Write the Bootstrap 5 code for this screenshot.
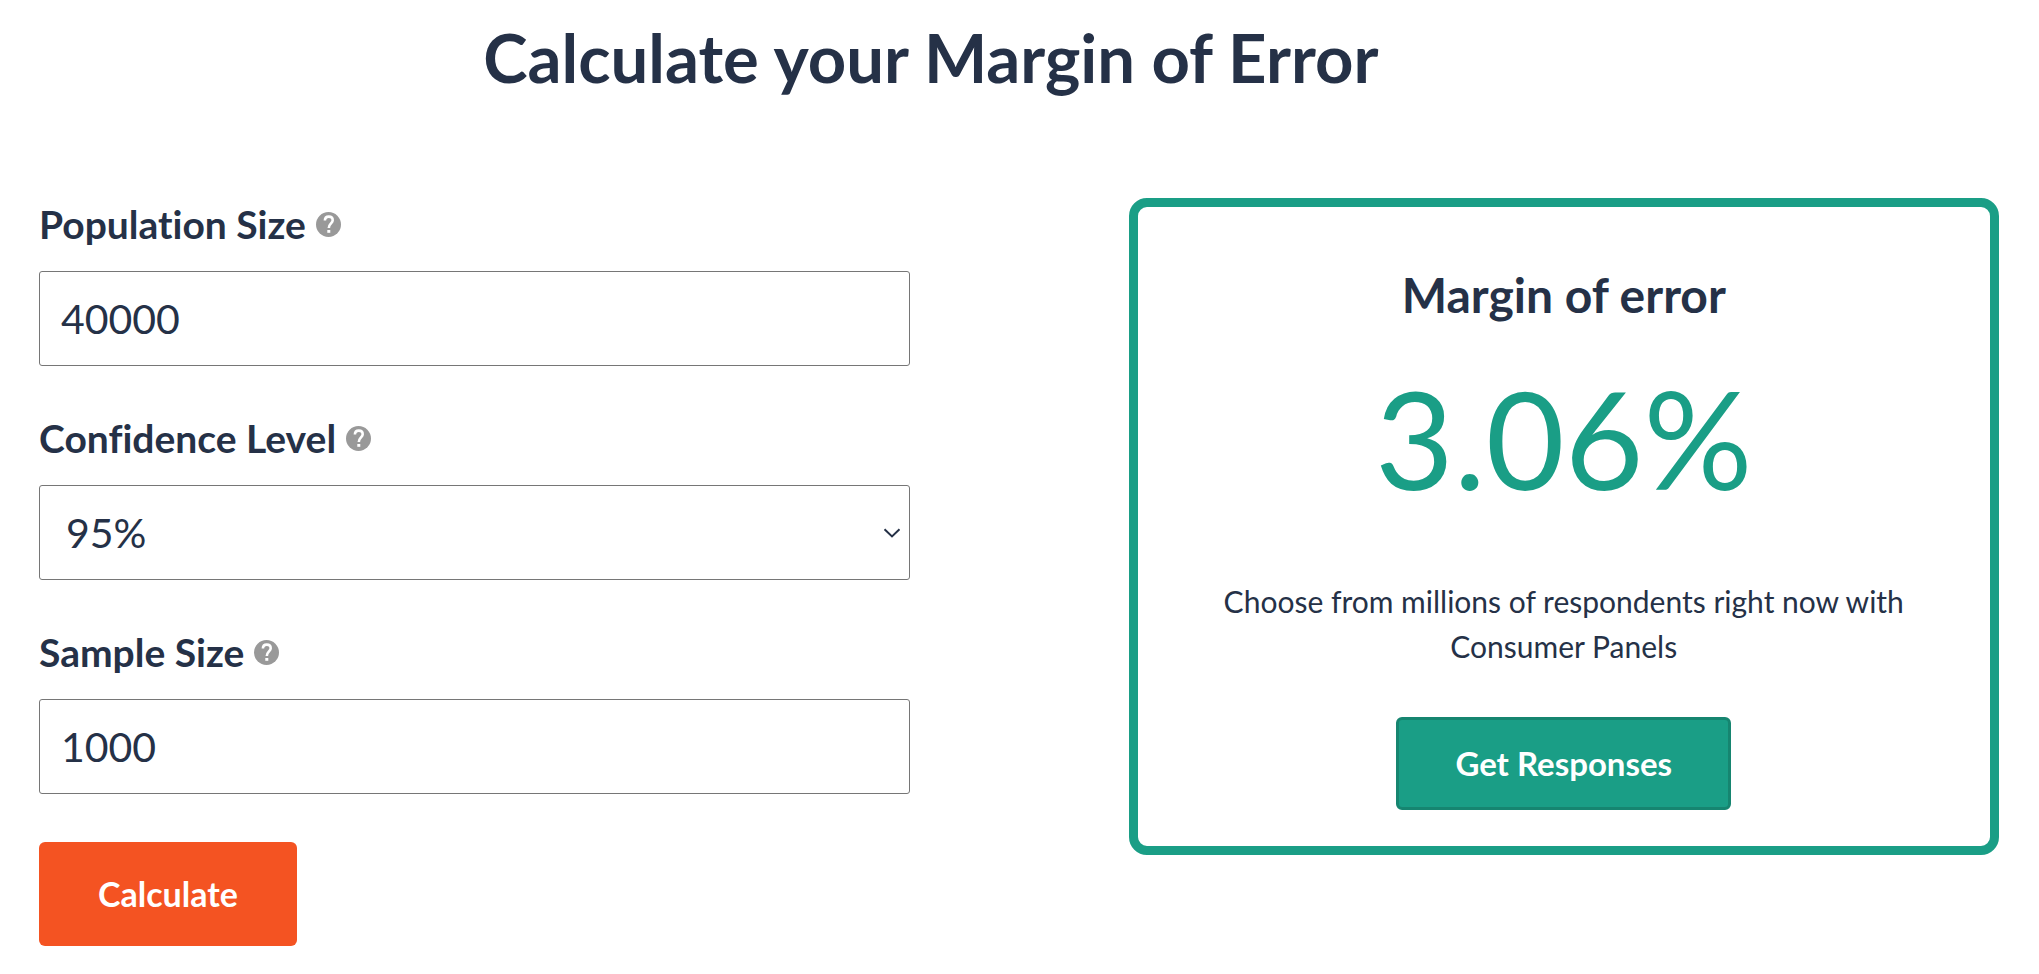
<!DOCTYPE html>
<html lang="en">
<head>
<meta charset="utf-8">
<meta name="viewport" content="width=device-width, initial-scale=1">
<title>Margin of Error Calculator</title>
<link href="https://cdn.jsdelivr.net/npm/bootstrap@5.3.0/dist/css/bootstrap.min.css" rel="stylesheet">
<style>
  :root { --ink: #253147; --teal: #1a9e86; --orange: #f45322; }
  body { font-family: Lato, sans-serif; font-variant-ligatures: none; color: var(--ink); background: #fff; }
  .page { padding: 17px 40px 24px 39px; }
  .page-title { font-size: 67px; line-height: 80px; font-weight: 700; width: 91%; margin-bottom: 101px; }
  .calculator { display: grid; grid-template-columns: 1fr; gap: 48px; align-items: start; }
  @media (min-width: 1200px) { .calculator { grid-template-columns: 1fr 1fr; column-gap: 219px; } }

  .calc-form { padding-top: 2px; }
  .field { margin-bottom: 48px; }
  .field-head { gap: 10px; margin-bottom: 23px; }
  .field-head label { font-size: 39px; line-height: 48px; font-weight: 700; }
  .help { width: 25px; height: 25px; }
  .field .form-control, .field .form-select {
    height: 95px; padding: 0 21px; font-size: 41px; color: var(--ink);
    border: 1px solid #767676; border-radius: 3px; background-color: #fff;
  }
  .field .form-select {
    padding: 0 48px 0 26px;
    background-image: url("data:image/svg+xml,%3csvg xmlns='http://www.w3.org/2000/svg' viewBox='0 0 18 10'%3e%3cpath fill='none' stroke='%23253147' stroke-width='2' d='M1.5 1.2 9 8.4 16.5 1.2'/%3e%3c/svg%3e");
    background-size: 18px 10px; background-position: right 8px center;
  }
  .btn-action { line-height: 40px; font-weight: 700; color: #fff; border-radius: 6px; }
  .btn-calculate { font-size: 34px; padding: 32px 59px; border: 0; background: var(--orange); }
  .btn-responses { font-size: 33px; padding: 23px 56px 24px; border: 3px solid #168570; background: var(--teal); }
  .btn-calculate:hover { background: #db4518; color: #fff; }
  .btn-responses:hover { background: #168570; color: #fff; }

  .result { border: 9px solid var(--teal); border-radius: 18px; padding: 59px 48px 36px; }
  .result h2 { font-size: 48px; line-height: 58px; font-weight: 700; margin-bottom: 34px; }
  .result-value { font-size: 136px; line-height: 160px; color: var(--teal); margin-bottom: 61px; }
  .result p { font-size: 30px; line-height: 45px; margin-bottom: 48px; }
</style>
</head>
<body>
<svg class="d-none" aria-hidden="true">
  <symbol id="help-icon" viewBox="0 0 25 25">
    <circle cx="12.500" cy="12.500" r="12.500" fill="#999"/>
    <path d="M8.900 8.600C8.900 6 10.500 4.600 12.800 4.600S16.700 6 16.700 8.300C16.700 11.300 12.800 11.700 12.800 16" fill="none" stroke="#fff" stroke-width="2.600"/>
    <rect x="11.300" y="18" width="3" height="2.800" fill="#fff"/>
  </symbol>
</svg>
<main class="container-fluid page">
  <h1 class="page-title text-center">Calculate your Margin of Error</h1>
  <div class="calculator">
    <form class="calc-form">
      <div class="field">
        <div class="field-head d-flex align-items-center">
          <label for="population">Population Size</label>
          <button type="button" class="help btn p-0 border-0 d-flex" aria-label="About population size">
            <svg width="25" height="25" aria-hidden="true"><use href="#help-icon"/></svg>
          </button>
        </div>
        <input type="text" inputmode="numeric" class="form-control" id="population" value="40000">
      </div>
      <div class="field">
        <div class="field-head d-flex align-items-center">
          <label for="confidence">Confidence Level</label>
          <button type="button" class="help btn p-0 border-0 d-flex" aria-label="About confidence level">
            <svg width="25" height="25" aria-hidden="true"><use href="#help-icon"/></svg>
          </button>
        </div>
        <select class="form-select" id="confidence">
          <option>90%</option>
          <option selected>95%</option>
          <option>99%</option>
        </select>
      </div>
      <div class="field">
        <div class="field-head d-flex align-items-center">
          <label for="sample">Sample Size</label>
          <button type="button" class="help btn p-0 border-0 d-flex" aria-label="About sample size">
            <svg width="25" height="25" aria-hidden="true"><use href="#help-icon"/></svg>
          </button>
        </div>
        <input type="text" inputmode="numeric" class="form-control" id="sample" value="1000">
      </div>
      <button type="button" class="btn btn-action btn-calculate">Calculate</button>
    </form>
    <section class="result text-center">
      <h2>Margin of error</h2>
      <div class="result-value">3.06%</div>
      <p>Choose from millions of respondents right now with Consumer Panels</p>
      <button type="button" class="btn btn-action btn-responses">Get Responses</button>
    </section>
  </div>
</main>
<script src="https://cdn.jsdelivr.net/npm/bootstrap@5.3.0/dist/js/bootstrap.bundle.min.js"></script>
</body>
</html>
